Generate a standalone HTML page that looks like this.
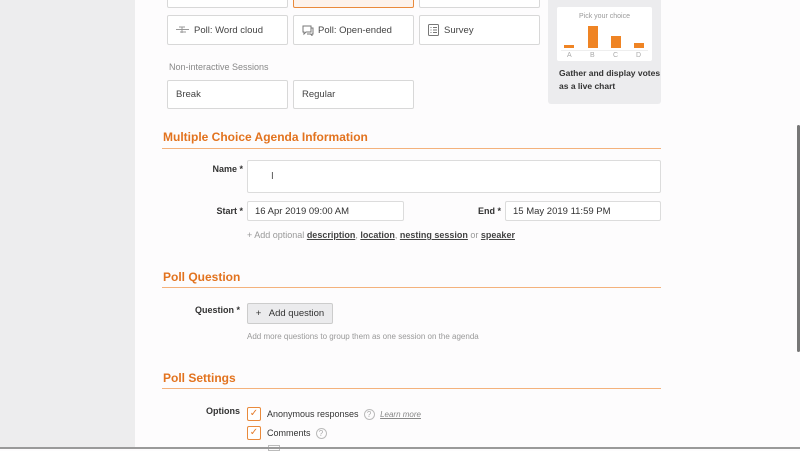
<!DOCTYPE html>
<html><head><meta charset="utf-8"><style>
*{box-sizing:border-box;margin:0;padding:0}
body{width:800px;height:449px;overflow:hidden;background:#fdfcfd;font-family:"Liberation Sans",sans-serif;color:#333;position:relative}
.a{position:absolute}
.side{left:0;top:0;width:135px;height:449px;background:#ededee}
.card{position:absolute;background:#fff;border:1px solid #d8d8d8;border-radius:2px;height:30px;font-size:9.5px;color:#444;padding-left:8px;display:flex;align-items:center}
.h{position:absolute;left:163px;font-size:12px;font-weight:bold;color:#e2731f}
.hl{position:absolute;left:162px;width:499px;height:1px;background:#f4b27c}
.lbl{position:absolute;font-size:9px;font-weight:bold;color:#333;text-align:right}
.inp{position:absolute;background:#fff;border:1px solid #dcdcdc;border-radius:2px;font-size:9.5px;color:#333;padding-left:7px;display:flex;align-items:center}
.cb{position:absolute;left:247px;width:14px;height:14px;border:1.5px solid #e98a3c;border-radius:2px;background:#fff;color:#e47b2a;font-size:10px;line-height:11px;text-align:center}
.q{display:inline-block;width:11px;height:11px;border:1px solid #bbb;border-radius:50%;font-size:8px;color:#aaa;text-align:center;line-height:10px;margin-left:5px;vertical-align:middle}
u{text-decoration:underline}
</style></head><body>
<div class="a side"></div>
<div class="card" style="left:167px;top:-8px;width:121px;height:16px"></div>
<div class="card" style="left:293px;top:-8px;width:121px;height:16px;border-color:#e98a3c;background:#fdf3ec"></div>
<div class="card" style="left:419px;top:-8px;width:121px;height:16px"></div>
<div class="card" style="left:167px;top:15px;width:121px"><svg width="13" height="8" style="margin-right:5px" viewBox="0 0 13 8"><path d="M3 1h6M0 3.5h13M4 6h6M6 1v6" stroke="#999"/></svg>Poll: Word cloud</div>
<div class="card" style="left:293px;top:15px;width:121px"><svg width="12" height="11" style="margin-right:4px" viewBox="0 0 12 11"><path d="M1 1h8v6H4l-2 2V7H1z" fill="none" stroke="#777"/><path d="M9 3h2v6h-1v1.5L8.5 9H5" fill="none" stroke="#777"/></svg>Poll: Open-ended</div>
<div class="card" style="left:419px;top:15px;width:121px"><svg width="11" height="12" style="margin-right:5px" viewBox="0 0 11 12"><rect x="0.5" y="0.5" width="10" height="11" rx="1" fill="none" stroke="#777"/><path d="M2.5 3.5h1M5 3.5h4M2.5 6h1M5 6h4M2.5 8.5h1M5 8.5h4" stroke="#777"/></svg>Survey</div>
<div class="a" style="left:169px;top:62px;font-size:9px;color:#888">Non-interactive Sessions</div>
<div class="card" style="left:167px;top:80px;width:121px;height:29px">Break</div>
<div class="card" style="left:293px;top:80px;width:121px;height:29px">Regular</div>
<div class="a" style="left:548px;top:-5px;width:113px;height:109px;background:#ececee;border-radius:3px"></div>
<div class="a" style="left:557px;top:7px;width:95px;height:54px;background:#fff;border-radius:2px">
 <div style="text-align:center;font-size:7px;color:#999;margin-top:6px">Pick your choice</div>
 <div class="a" style="left:7px;top:38px;width:10px;height:3px;background:#ef8424"></div>
 <div class="a" style="left:31px;top:19px;width:10px;height:22px;background:#ef8424"></div>
 <div class="a" style="left:54px;top:29px;width:10px;height:12px;background:#ef8424"></div>
 <div class="a" style="left:77px;top:36px;width:10px;height:5px;background:#ef8424"></div>
 <div class="a" style="left:4px;top:43px;width:87px;height:1px;background:#eee"></div>
 <div class="a" style="left:10px;top:45px;font-size:7px;color:#aaa">A</div>
 <div class="a" style="left:33px;top:45px;font-size:7px;color:#aaa">B</div>
 <div class="a" style="left:56px;top:45px;font-size:7px;color:#aaa">C</div>
 <div class="a" style="left:79px;top:45px;font-size:7px;color:#aaa">D</div>
</div>
<div class="a" style="left:559px;top:67px;font-size:8.5px;font-weight:bold;color:#333;line-height:13px">Gather and display votes<br>as a live chart</div>

<div class="h" style="top:130px">Multiple Choice Agenda Information</div>
<div class="hl" style="top:148px"></div>
<div class="lbl" style="left:190px;top:164px;width:53px">Name *</div>
<div class="inp" style="left:247px;top:160px;width:414px;height:33px"><span class="a" style="left:23px;top:10px;font-size:10px;color:#555">I</span></div>
<div class="lbl" style="left:190px;top:206px;width:53px">Start *</div>
<div class="inp" style="left:247px;top:201px;width:157px;height:20px">16 Apr 2019 09:00 AM</div>
<div class="lbl" style="left:460px;top:206px;width:41px">End *</div>
<div class="inp" style="left:505px;top:201px;width:156px;height:20px">15 May 2019 11:59 PM</div>
<div class="a" style="left:247px;top:230px;font-size:9px;color:#999">+ Add optional <b style="color:#444"><u>description</u></b>, <b style="color:#444"><u>location</u></b>, <b style="color:#444"><u>nesting session</u></b> or <b style="color:#444"><u>speaker</u></b></div>

<div class="h" style="top:270px">Poll Question</div>
<div class="hl" style="top:287px"></div>
<div class="lbl" style="left:180px;top:305px;width:60px">Question *</div>
<div class="a" style="left:247px;top:303px;width:86px;height:21px;background:#ebebed;border:1px solid #ccc;border-radius:2px;font-size:9.5px;color:#333;text-align:center;line-height:19px">+&nbsp;&nbsp; Add question</div>
<div class="a" style="left:247px;top:332px;font-size:8px;color:#999">Add more questions to group them as one session on the agenda</div>

<div class="h" style="top:371px">Poll Settings</div>
<div class="hl" style="top:388px"></div>
<div class="lbl" style="left:190px;top:406px;width:50px">Options</div>
<div class="cb" style="top:407px">✓</div>
<div class="a" style="left:267px;top:409px;font-size:9px;color:#333">Anonymous responses<span class="q">?</span> <i style="color:#888;font-size:8px;margin-left:3px"><u>Learn more</u></i></div>
<div class="cb" style="top:426px">✓</div>
<div class="a" style="left:267px;top:428px;font-size:9px;color:#333">Comments<span class="q">?</span></div>
<div class="a" style="left:268px;top:445px;width:12px;height:6px;border:1px solid #bbb"></div>
<div class="a" style="left:0;top:447px;width:800px;height:2px;background:#9a9a9a"></div>
<div class="a" style="left:797px;top:125px;width:3px;height:227px;background:#777;border-radius:2px"></div>
</body></html>
